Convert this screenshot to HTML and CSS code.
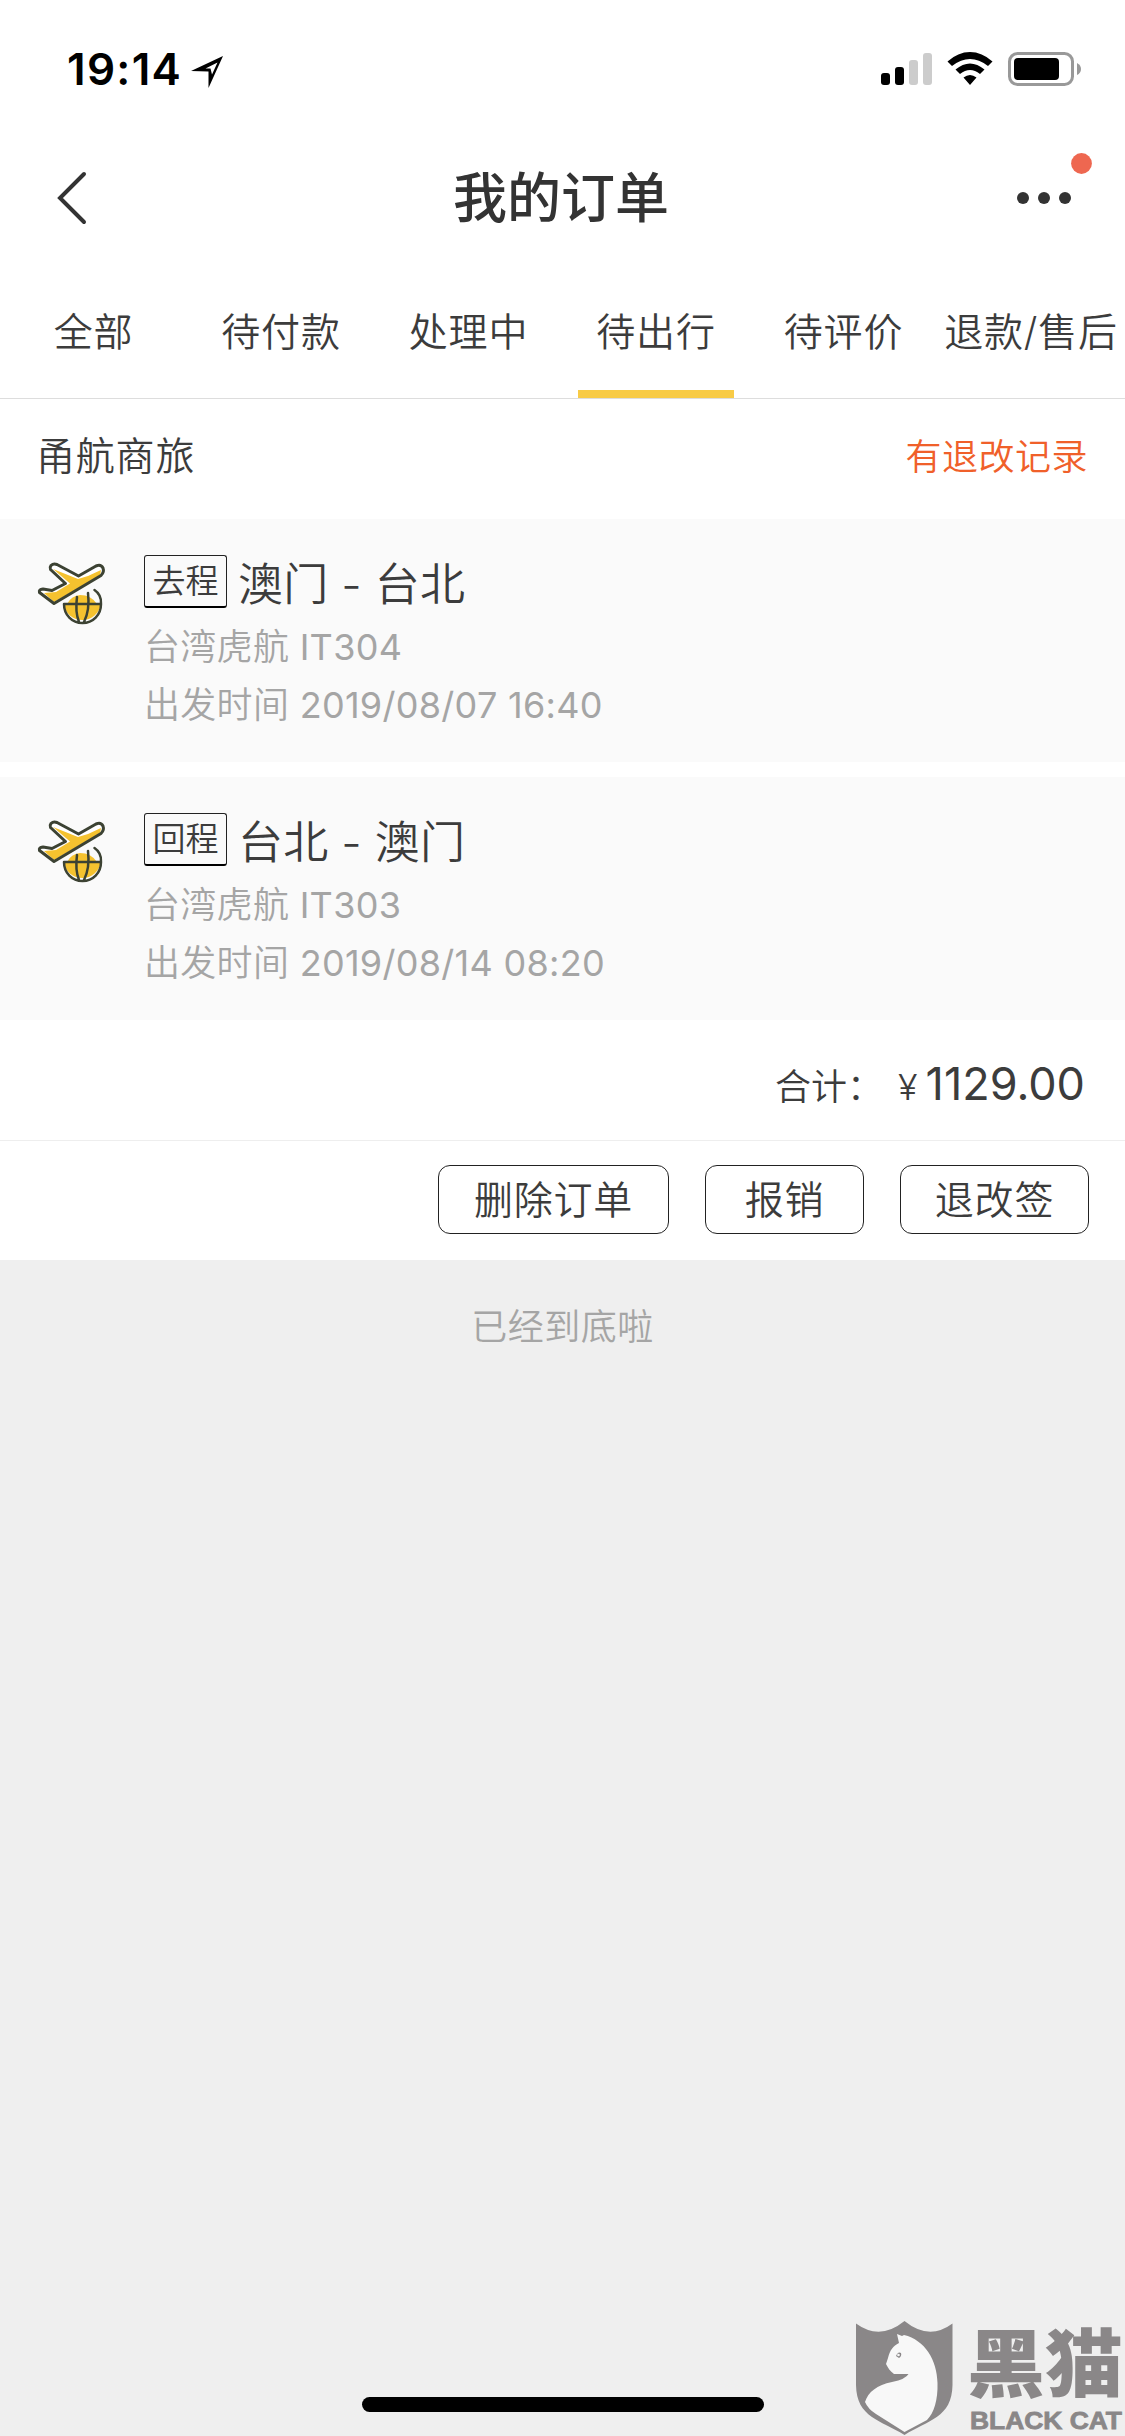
FILE: index.html
```html
<!DOCTYPE html>
<html lang="zh-CN">
<head>
<meta charset="utf-8">
<title>我的订单</title>
<link rel="stylesheet" href="styles.css">
</head>
<body>
<svg class="defs" width="0" height="0" aria-hidden="true">
  <symbol id="flight" viewBox="0 0 90 90">
    <path d="M37 54Q41 46 50 45Q61 45 67 54Z" fill="#f5c22f"/>
    <path d="M33.500 54A19 19 0 0 0 71 54Z" fill="#f5c22f"/>
    <path d="M21 15.500Q23.500 13 27 14.500L48.500 26L66 16Q71 14 73 18Q74.500 22 71 25.500L24 53.500L9.500 42.500Q8.500 39.500 13 39L22 40.500L35.500 33.500L20.500 19.500Q19.500 17.500 21 15.500Z" fill="#fff"/>
    <path d="M23 19L48 29L58 26L71 20L70 25.500L24 52L14 43L26 42L40 33.500Z" fill="#f5c22f"/>
    <path d="M21 15.500Q23.500 13 27 14.500L48.500 26L66 16Q71 14 73 18Q74.500 22 71 25.500L24 53.500L9.500 42.500Q8.500 39.500 13 39L22 40.500L35.500 33.500L20.500 19.500Q19.500 17.500 21 15.500Z" fill="none" stroke="#3c4233" stroke-width="3" stroke-linejoin="round"/>
    <path d="M34 54H71M34 54C34 65 42 73 52.500 73S71 65 71 54C71.500 48 69 43 64.500 40M47 47Q45 62 49 72M58 43Q60 60 54 72" fill="none" stroke="#3c4233" stroke-width="2.500" stroke-linecap="round"/>
  </symbol>
</svg>
<div class="screen">
  <header class="status">
    <span class="clock">19:14</span>
    <svg class="locate" width="33" height="33" viewBox="0 0 33 33"><path fill-rule="evenodd" d="M0 15L32 0L17.500 32V15.500ZM14.500 12.600L26.500 6.500L21 18.500L19.500 12.600Z"/></svg>
    <svg class="radios" width="202" height="36" viewBox="0 0 202 36">
      <rect x="1" y="22" width="9" height="12" rx="3"/><rect x="15" y="16" width="9" height="18" rx="3"/>
      <g fill="#ccc"><rect x="29" y="9" width="9" height="25" rx="3"/><rect x="43" y="2" width="9" height="32" rx="3"/></g>
      <path d="M67.500 10.500Q78 1 90 1T112.500 10.500L108 15Q90 1 72 15ZM75.500 18.500Q90 6.500 104.500 18.500L100 23Q90 15 80 23ZM83.500 26.500Q90 21.500 96.500 26.500L90 34Z"/>
      <rect x="129.500" y="2.500" width="63" height="31" rx="8" fill="none" stroke="#999" stroke-width="3"/>
      <rect x="134" y="7" width="45" height="22" rx="4"/>
      <path d="M197 12Q201 14 201 18T197 24Z" fill="#999"/>
    </svg>
  </header>
  <nav class="titlebar">
    <svg class="back" width="32" height="56" viewBox="0 0 32 56"><path d="M28 4L4 28L28 52" fill="none" stroke="#333" stroke-width="4" stroke-linecap="round"/></svg>
    <h1 class="title">我的订单</h1>
    <svg class="more" width="80" height="60" viewBox="0 0 80 60"><g fill="#333"><circle cx="11" cy="45" r="6"/><circle cx="32" cy="45" r="6"/><circle cx="53" cy="45" r="6"/></g><circle cx="69.500" cy="10.500" r="10.400" fill="#ee6750"/></svg>
  </nav>
  <div class="tabs">
    <span class="tab">全部</span><span class="tab">待付款</span><span class="tab">处理中</span><span class="tab active">待出行</span><span class="tab">待评价</span><span class="tab">退款/售后</span>
  </div>
  <section class="order">
    <div class="shop"><span class="shop-name">甬航商旅</span><span class="change">有退改记录</span></div>
    <div class="trip">
      <svg class="trip-icon" width="90" height="90"><use href="#flight"/></svg>
      <div class="trip-body">
        <div class="route"><span class="tag">去程</span><span class="cities">澳门 - 台北</span></div>
        <div class="meta">台湾虎航 <span class="num">IT304</span></div>
        <div class="meta">出发时间 <span class="num">2019/08/07 16:40</span></div>
      </div>
    </div>
    <div class="trip">
      <svg class="trip-icon" width="90" height="90"><use href="#flight"/></svg>
      <div class="trip-body">
        <div class="route"><span class="tag">回程</span><span class="cities">台北 - 澳门</span></div>
        <div class="meta">台湾虎航 <span class="num">IT303</span></div>
        <div class="meta">出发时间 <span class="num">2019/08/14 08:20</span></div>
      </div>
    </div>
    <div class="total"><span class="total-label">合计：</span><span class="yen">¥</span><span class="amount">1129.00</span></div>
    <div class="actions"><span class="btn wide">删除订单</span><span class="btn small">报销</span><span class="btn mid">退改签</span></div>
  </section>
  <p class="end">已经到底啦</p>
  <footer class="bottom">
    <div class="home"></div>
    <svg class="brand" width="275" height="120" viewBox="0 -4 275 120">
      <path d="M6 3.500Q30 21 54.500 1Q79 21 102.500 3.500V65C102 98 78 100 54.500 115C31 100 6.500 98 6 65Z" fill="#8a8788"/>
      <path d="M47 14L52 16L54 15C75 20 87 40 87.500 63C88 80 84 93 77 100L54.500 112L26 94Q18 89 15 82C18 72 27 65 42 62Q56 59 58.500 54H44C40 51 38 48 36 44L38 38C40 30 43 26 49 23Z" fill="#f8f8f8"/>
      <path d="M46 36Q48 31 51 33Q52 36 49 38Z" fill="#8a8788"/><circle cx="48.500" cy="35" r="1.300" fill="#f8f8f8"/>
      <text class="brand-cn" x="117" y="71" textLength="156" lengthAdjust="spacingAndGlyphs">黑猫</text>
      <text class="brand-en" x="120" y="109" textLength="152" lengthAdjust="spacingAndGlyphs">BLACK CAT</text>
    </svg>
  </footer>
</div>
</body>
</html>
```
FILE: styles.css
```css
* { box-sizing: border-box; }
body { margin: 0; background: #efefef; color: #3c3c3c; font-family: Inter, "Noto Sans CJK SC", sans-serif; font-weight: 350; }
.defs { position: absolute; }
.screen { width: 1125px; height: 2436px; display: flex; flex-direction: column; overflow: hidden; }
.status { height: 132px; background: #fff; display: flex; align-items: flex-start; padding: 51px 43px 0 67px; }
.clock { font-size: 44px; line-height: 36px; font-weight: 600; letter-spacing: 1.3px; color: #000; width: 124px; white-space: nowrap; }
.locate { margin-top: 5px; }
.radios { margin-left: auto; }
.titlebar { height: 132px; background: #fff; display: flex; align-items: center; justify-content: space-between; padding: 0 33px 0 56px; }
.back { width: 80px; padding-right: 48px; }
.title { margin: 2px 0 0 -26px; font-size: 54px; line-height: 80px; font-weight: 500; color: #333; }
.more { margin-top: -30px; }
.tabs { height: 135px; background: #fff; border-bottom: 1px solid #ddd; display: grid; grid-template-columns: repeat(6, 187px); column-gap: .5px; }
.tab { height: 134px; font-size: 39px; line-height: 136px; letter-spacing: .8px; text-align: center; white-space: nowrap; }
.tab.active { margin: 0 15.500px; border-bottom: 8px solid #f8cb46; }
.order { background: #fff; height: 861px; display: flex; flex-direction: column; }
.shop { height: 120px; display: flex; align-items: center; justify-content: space-between; padding: 0 37px 12px 36px; }
.shop-name { font-size: 39px; letter-spacing: .8px; }
.change { font-size: 36px; letter-spacing: .5px; margin-top: 2px; color: #f0602a; }
.trip { height: 243px; margin-bottom: 15px; background: #fafafa; display: flex; padding: 31px 0 0 30px; }
.trip-body { margin-left: 24px; }
.route { display: flex; height: 64px; }
.tag { width: 83px; height: 53px; margin-top: 5px; border: 1px solid #222; border-bottom: 2px solid #000; border-radius: 3px; font-size: 33px; line-height: 50px; text-align: center; }
.cities { margin-left: 11px; font-size: 45px; line-height: 69px; letter-spacing: .2px; white-space: pre; }
.meta { height: 58px; color: #a5a5a5; font-size: 36px; line-height: 66px; letter-spacing: .3px; white-space: nowrap; }
.num { font-weight: 400; letter-spacing: .3px; }
.total { height: 121px; margin-top: -15px; border-bottom: 1px solid #eee; display: flex; align-items: baseline; justify-content: flex-end; padding: 32px 40px 0 0; line-height: 64px; }
.total-label { font-size: 36px; }
.yen { font-size: 36px; margin: 0 8px 0 15px; }
.amount { font-size: 45px; font-weight: 400; }
.actions { display: flex; justify-content: flex-end; gap: 36px; padding: 24px 36px 0; }
.btn { height: 69px; border: 1px solid #222; border-radius: 12px; font-size: 39px; line-height: 68px; letter-spacing: .8px; text-align: center; }
.wide { width: 231px; }
.small { width: 159px; }
.mid { width: 189px; }
.end { margin: 37px 0 0; text-align: center; font-size: 36px; line-height: 60px; letter-spacing: .5px; color: #a5a5a5; }
.bottom { margin-top: auto; height: 120px; display: flex; justify-content: flex-end; }
.home { width: 402px; height: 15px; margin: 81px 86px 0 0; border-radius: 8px; background: #000; }
.brand-cn { font: 900 74px "Noto Sans CJK SC", sans-serif; fill: #8a8788; }
.brand-en { font: 700 24px "Liberation Sans", sans-serif; fill: #8a8788; stroke: #8a8788; stroke-width: .8px; }
```
